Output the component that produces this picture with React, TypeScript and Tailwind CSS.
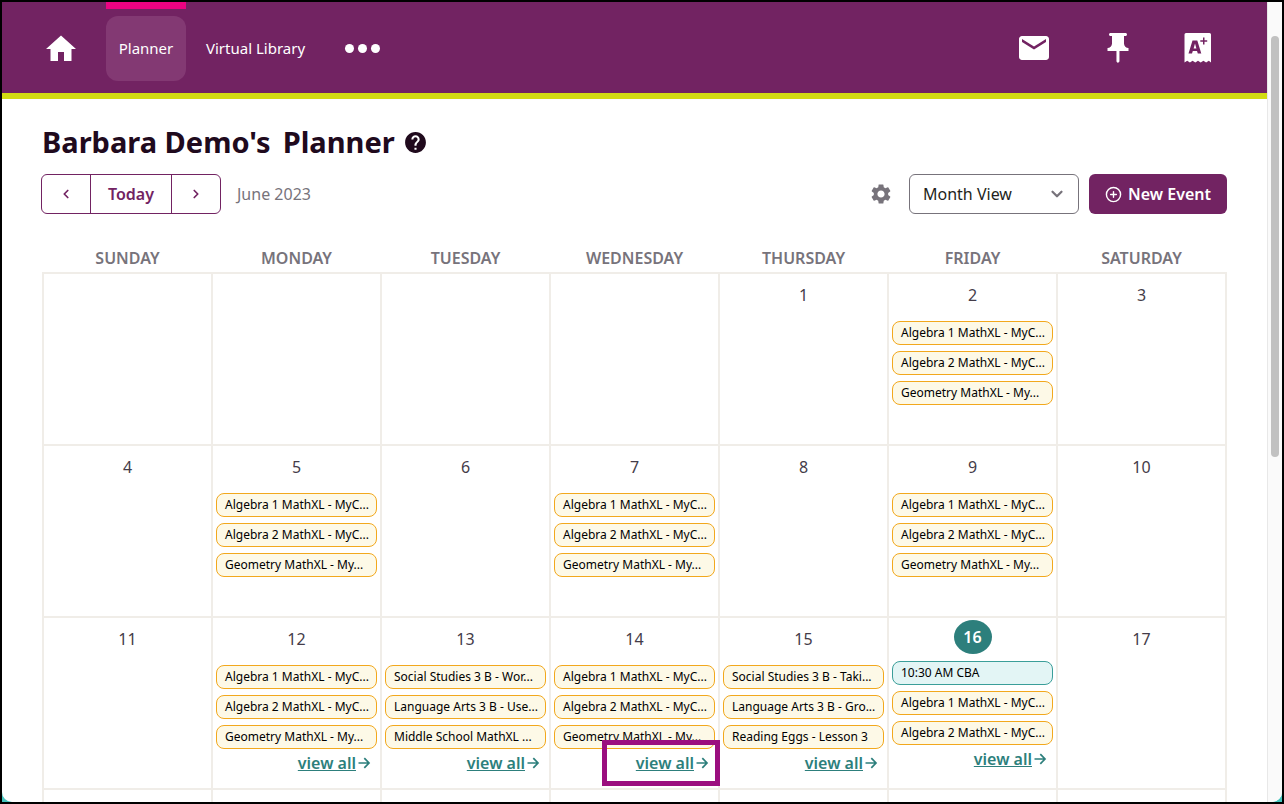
import { MdEmail, MdHelp, MdHome, MdPushPin, MdSettings } from "react-icons/md";
import { ChevronDown, ChevronLeft, ChevronRight, CirclePlus } from "lucide-react";

type CalendarEvent = { title: string; tone?: "live" };

type Day = {
  date?: number;
  today?: boolean;
  events?: CalendarEvent[];
  more?: boolean;
  highlight?: boolean;
};

const WEEKDAYS = [
  "SUNDAY",
  "MONDAY",
  "TUESDAY",
  "WEDNESDAY",
  "THURSDAY",
  "FRIDAY",
  "SATURDAY",
];

const MATH: CalendarEvent[] = [
  { title: "Algebra 1 MathXL - MyC..." },
  { title: "Algebra 2 MathXL - MyC..." },
  { title: "Geometry MathXL - My..." },
];

const WEEKS: Day[][] = [
  [{}, {}, {}, {}, { date: 1 }, { date: 2, events: MATH }, { date: 3 }],
  [
    { date: 4 },
    { date: 5, events: MATH },
    { date: 6 },
    { date: 7, events: MATH },
    { date: 8 },
    { date: 9, events: MATH },
    { date: 10 },
  ],
  [
    { date: 11 },
    { date: 12, events: MATH, more: true },
    {
      date: 13,
      more: true,
      events: [
        { title: "Social Studies 3 B - Wor..." },
        { title: "Language Arts 3 B - Use..." },
        { title: "Middle School MathXL ..." },
      ],
    },
    { date: 14, events: MATH, more: true, highlight: true },
    {
      date: 15,
      more: true,
      events: [
        { title: "Social Studies 3 B - Taki..." },
        { title: "Language Arts 3 B - Gro..." },
        { title: "Reading Eggs - Lesson 3" },
      ],
    },
    {
      date: 16,
      today: true,
      more: true,
      events: [
        { title: "10:30 AM CBA", tone: "live" },
        { title: "Algebra 1 MathXL - MyC..." },
        { title: "Algebra 2 MathXL - MyC..." },
      ],
    },
    { date: 17 },
  ],
  [{}, {}, {}, {}, {}, {}, {}],
];

function GradesIcon() {
  return (
    <svg width="28" height="30" viewBox="0 0 28 30" aria-hidden>
      <path
        fill="#fff"
        d="M2 0h23.500a1.500 1.500 0 0 1 1.500 1.500V29.500l-2.200-1.800-2.700 1.800-2.700-1.800-2.700 1.800-2.700-1.800-2.700 1.800-2.700-1.800-2.700 1.800-2.700-1.800L0.500 29.500V1.500A1.500 1.500 0 0 1 2 0z"
      />
      <path
        fill="#722362"
        fillRule="evenodd"
        d="M8.500 7.500h4.800l4 13h-3.500l-.8-2.600H8.800L8 20.500H4.500zM11 10.500l-1.400 5h2.800zM19 4.500h1.500v2.700h2.700v1.500h-2.700v2.700H19V8.700h-2.700V7.200H19z"
      />
    </svg>
  );
}

function ArrowIcon() {
  return (
    <svg
      width="16"
      height="16"
      viewBox="0 0 16 16"
      fill="none"
      stroke="currentColor"
      strokeWidth="1.700"
      aria-hidden
    >
      <path d="M2.500 8h10.200M8.300 3.200L13 8l-4.700 4.800" />
    </svg>
  );
}

function TopNav() {
  return (
    <header className="flex h-[97px] shrink-0 items-stretch justify-between border-b-6 border-[#d2dc12] bg-[#722362] pr-[55px] pl-10 text-white">
      <nav className="flex items-stretch text-[15px]">
        <a
          href="#home"
          aria-label="Home"
          className="flex w-[38px] items-center justify-center pt-[2px]"
        >
          <MdHome size={36} />
        </a>
        <a
          href="#planner"
          aria-current="page"
          className="ml-[26px] flex w-20 flex-col border-t-7 border-[#ec0382] pt-[7px]"
        >
          <span className="flex h-[65px] items-center justify-center rounded-xl bg-[#833973]">
            Planner
          </span>
        </a>
        <a href="#library" className="flex items-center px-5 pt-[2px]">
          Virtual Library
        </a>
        <button aria-label="More" className="ml-5 flex items-center gap-1 pt-[2px]">
          <span className="size-[9px] rounded-full bg-white" />
          <span className="size-[9px] rounded-full bg-white" />
          <span className="size-[9px] rounded-full bg-white" />
        </button>
      </nav>
      <div className="flex items-center gap-12">
        <button aria-label="Mail">
          <MdEmail size={36} />
        </button>
        <button aria-label="Pinned">
          <MdPushPin size={36} />
        </button>
        <button aria-label="Grades">
          <GradesIcon />
        </button>
      </div>
    </header>
  );
}

function Toolbar() {
  return (
    <div className="-ml-px mt-[13px] flex items-center">
      <div className="flex h-10 divide-x divide-[#722362] rounded-md border border-[#722362] text-base font-semibold text-[#722362]">
        <button
          aria-label="Previous month"
          className="flex w-[49px] items-center justify-center"
        >
          <ChevronLeft size={14} strokeWidth={3} />
        </button>
        <button className="w-[81px]">Today</button>
        <button aria-label="Next month" className="flex w-12 items-center justify-center">
          <ChevronRight size={14} strokeWidth={3} />
        </button>
      </div>
      <span className="ml-4 text-[#77737b]">June 2023</span>
      <button aria-label="Settings" className="ml-auto text-[#77737b]">
        <MdSettings size={24} />
      </button>
      <div className="relative ml-4">
        <select
          aria-label="Calendar view"
          className="h-10 w-[170px] appearance-none rounded-md border border-[#77737b] bg-white pl-[13px] text-base text-[#231f20]"
        >
          <option>Month View</option>
        </select>
        <ChevronDown
          size={18}
          strokeWidth={3}
          className="pointer-events-none absolute top-[11px] right-[13px] text-[#77737b]"
        />
      </div>
      <button className="ml-[10px] flex h-10 w-[138px] items-center justify-center gap-[6px] rounded-md bg-[#722362] font-semibold text-white">
        <CirclePlus size={17} />
        New Event
      </button>
    </div>
  );
}

function DayCell({ day }: { day: Day }) {
  return (
    <td className="h-[172px] border-2 border-[#f0ede8] p-0 px-[3px] align-top">
      {day.date && (
        <div
          className={
            day.today
              ? "mx-auto mt-[2px] mb-[7px] flex h-[34px] w-[38px] items-center justify-center rounded-[50%] bg-[#2d7f7c] font-semibold text-white"
              : "mt-[9px] mb-[14px] h-6 text-center text-[#443c49]"
          }
        >
          {day.date}
        </div>
      )}
      {day.events && (
        <ul className="space-y-[6px]">
          {day.events.map((event) => (
            <li
              key={event.title}
              className={
                event.tone === "live"
                  ? "h-6 truncate rounded-lg border border-[#3a9e99] bg-[#e3f5f5] pr-1 pl-2 text-xs leading-[22px] text-black"
                  : "h-6 truncate rounded-lg border border-[#f2a81d] bg-[#fdf9e7] pr-1 pl-2 text-xs leading-[22px] text-black"
              }
            >
              {event.title}
            </li>
          ))}
        </ul>
      )}
      {day.more && (
        <div className="relative mt-[2px] flex h-6 items-center justify-end pr-[5px] text-[#2d7f7c]">
          {day.highlight && (
            <span className="absolute -top-[11px] -right-[5px] h-[46px] w-[118px] border-5 border-[#9b0e7f]" />
          )}
          <a href={`#day-${day.date}`} className="flex items-center font-semibold">
            <span className="underline">view all</span>
            <ArrowIcon />
          </a>
        </div>
      )}
    </td>
  );
}

export default function App() {
  return (
    <div className="h-screen overflow-hidden border-2 border-black bg-[#45c4bd] font-['Noto_Sans',sans-serif]">
      <div className="flex h-full overflow-hidden rounded-b-[10px] bg-white">
        <div className="flex min-w-0 flex-1 flex-col overflow-hidden">
          <TopNav />
          <main className="px-10 pt-6">
            <h1 className="flex items-center text-[29px] leading-[38px] font-bold text-[#200a1d]">
              <span>Barbara Demo's</span>
              <span className="mr-2 ml-3">Planner</span>
              <MdHelp size={25} />
            </h1>
            <Toolbar />
            <table className="mt-[30px] w-full table-fixed border-collapse">
              <thead>
                <tr>
                  {WEEKDAYS.map((name) => (
                    <th
                      key={name}
                      className="h-[29px] p-0 pb-px font-semibold text-[#77737b]"
                    >
                      {name}
                    </th>
                  ))}
                </tr>
              </thead>
              <tbody>
                {WEEKS.map((week, w) => (
                  <tr key={w}>
                    {week.map((day, d) => (
                      <DayCell key={d} day={day} />
                    ))}
                  </tr>
                ))}
              </tbody>
            </table>
          </main>
        </div>
        <div className="w-[15px] shrink-0 border-l border-[#e8e8e8] bg-[#fafafa] pt-[34px] pl-[3px]">
          <div className="h-[55%] w-2 rounded-full bg-[#c1c1c1]" />
        </div>
      </div>
    </div>
  );
}
